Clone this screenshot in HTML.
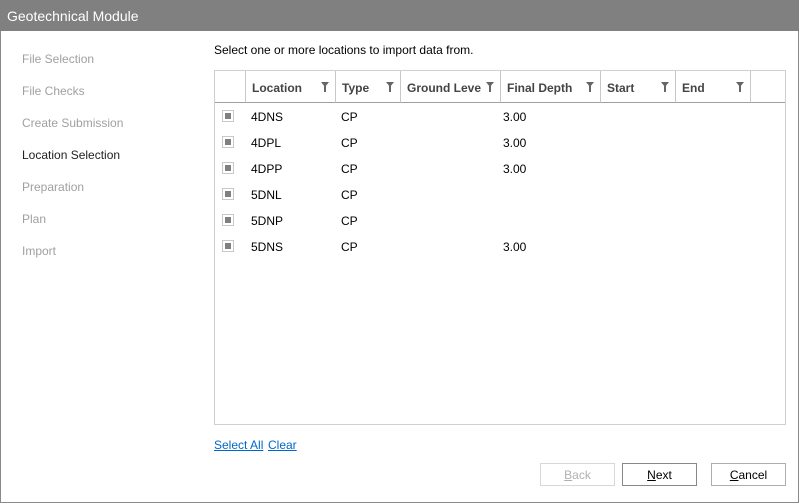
<!DOCTYPE html>
<html><head><style>
*{margin:0;padding:0;box-sizing:border-box}
body{width:799px;height:503px;position:relative;background:#fff;font-family:"Segoe UI","Liberation Sans",sans-serif;font-size:12px;color:#000;overflow:hidden}
.win{position:absolute;left:0;top:0;width:799px;height:503px;border:1px solid #8a8a8a}
.title{position:absolute;left:0;top:0;width:799px;height:31px;background:#808080;color:#fff;font-size:14px;line-height:32px;padding-left:7px}
.nav{position:absolute;left:22px;color:#a0a0a0;font-size:12px}
.grid{position:absolute;left:214px;top:70px;width:572px;height:355px;border:1px solid #d0d0d0}
.hdr{position:absolute;top:0;height:32px;border-right:1px solid #c8c8c8;border-bottom:1px solid #a0a0a0;font-weight:bold;color:#444;line-height:34px;padding-left:6px}
.f{position:absolute;right:6px;top:11px;width:0;height:0;border-left:4px solid transparent;border-right:4px solid transparent;border-top:5px solid #666}
.f:after{content:"";position:absolute;left:-1px;top:-1px;width:2px;height:6px;background:#666}
.cell{position:absolute;line-height:14px}
.cb{position:absolute;left:7px;width:12px;height:12px;border:1px solid #c8c8c8;background:#fff}
.cb:after{content:"";position:absolute;left:2px;top:2px;width:6px;height:6px;background:#808080}
.btn{position:absolute;top:463px;height:23px;width:75px;border:1px solid #adadad;background:#fff;text-align:center;line-height:23px}
a{color:#0066cc;text-decoration:underline;position:absolute;top:438px}
</style></head><body>
<div class="win"></div>
<div class="title">Geotechnical Module</div>
<div class="nav" style="top:52px">File Selection</div>
<div class="nav" style="top:84px">File Checks</div>
<div class="nav" style="top:116px">Create Submission</div>
<div class="nav" style="top:148px;color:#222">Location Selection</div>
<div class="nav" style="top:180px">Preparation</div>
<div class="nav" style="top:212px">Plan</div>
<div class="nav" style="top:244px">Import</div>
<div style="position:absolute;left:214px;top:43px">Select one or more locations to import data from.</div>
<div class="grid">
<div class="hdr" style="left:0;width:31px"></div>
<div class="hdr" style="left:31px;width:90px">Location<i class="f"></i></div>
<div class="hdr" style="left:121px;width:65px">Type<i class="f"></i></div>
<div class="hdr" style="left:186px;width:100px">Ground Leve<i class="f"></i></div>
<div class="hdr" style="left:286px;width:100px">Final Depth<i class="f"></i></div>
<div class="hdr" style="left:386px;width:75px">Start<i class="f"></i></div>
<div class="hdr" style="left:461px;width:75px">End<i class="f"></i></div>
<div class="hdr" style="left:536px;width:34px;border-right:none"></div>

<div class="cb" style="top:39px"></div><div class="cell" style="left:36px;top:39px">4DNS</div><div class="cell" style="left:126px;top:39px">CP</div><div class="cell" style="left:288px;top:39px">3.00</div>
<div class="cb" style="top:65px"></div><div class="cell" style="left:36px;top:65px">4DPL</div><div class="cell" style="left:126px;top:65px">CP</div><div class="cell" style="left:288px;top:65px">3.00</div>
<div class="cb" style="top:91px"></div><div class="cell" style="left:36px;top:91px">4DPP</div><div class="cell" style="left:126px;top:91px">CP</div><div class="cell" style="left:288px;top:91px">3.00</div>
<div class="cb" style="top:117px"></div><div class="cell" style="left:36px;top:117px">5DNL</div><div class="cell" style="left:126px;top:117px">CP</div>
<div class="cb" style="top:143px"></div><div class="cell" style="left:36px;top:143px">5DNP</div><div class="cell" style="left:126px;top:143px">CP</div>
<div class="cb" style="top:169px"></div><div class="cell" style="left:36px;top:169px">5DNS</div><div class="cell" style="left:126px;top:169px">CP</div><div class="cell" style="left:288px;top:169px">3.00</div>
</div>
<a style="left:214px">Select All</a><a style="left:268px">Clear</a>
<div class="btn" style="left:540px;border-color:#d8d8d8;color:#b0b0b0"><u>B</u>ack</div>
<div class="btn" style="left:622px;border-color:#888"><u>N</u>ext</div>
<div class="btn" style="left:711px"><u>C</u>ancel</div>
</body></html>
